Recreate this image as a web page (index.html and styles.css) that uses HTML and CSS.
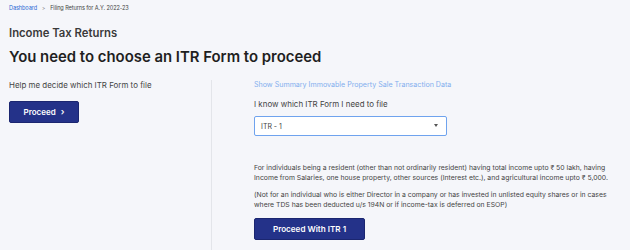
FILE: index.html
```html
<!DOCTYPE html>
<html>
<head>
<meta charset="utf-8">
<link rel="stylesheet" href="styles.css">
</head>
<body>
<div class="page">
  <nav class="crumbs">
    <a class="crumb-link">Dashboard</a>
    <span class="crumb-sep">&gt;</span>
    <span class="crumb-cur">Filing Returns for A.Y. 2022-23</span>
  </nav>
  <div class="subtitle">Income Tax Returns</div>
  <h1 class="title">You need to choose an ITR Form to proceed</h1>
  <div class="cols">
    <div class="left">
      <p class="label">Help me decide which ITR Form to file</p>
      <button class="btn btn-left">Proceed <span class="chev">&#8250;</span></button>
    </div>
    <div class="right">
      <a class="link">Show Summary Immovable Property Sale Transaction Data</a>
      <p class="label label-right">I know which ITR Form I need to file</p>
      <div class="select">
        <span>ITR - 1</span>
        <svg class="caret" width="4" height="3" viewBox="0 0 4 3"><path d="M0 0H4L2 3Z" fill="#555"/></svg>
      </div>
      <p class="desc">For individuals being a resident (other than not ordinarily resident) having total income upto &#8377; 50 lakh, having Income from Salaries, one house property, other sources (Interest etc.), and agricultural income upto &#8377; 5,000.</p>
      <p class="desc">(Not for an individual who is either Director in a company or has invested in unlisted equity shares or in cases where TDS has been deducted u/s 194N or if income-tax is deferred on ESOP)</p>
      <button class="btn btn-right">Proceed With ITR 1</button>
    </div>
  </div>
</div>
</body>
</html>
```
FILE: styles.css
```css
html, body {
  margin: 0;
  padding: 0;
  background: #f5f6fa;
  font-family: Inter, "Noto Sans", sans-serif;
  color: #2b2b2b;
}
.page {
  width: 630px;
  height: 250px;
  overflow: hidden;
  padding: 3px 9px 0 9px;
  box-sizing: border-box;
}
.crumbs {
  display: flex;
  align-items: center;
  gap: 5px;
  font-size: 5.6px;
  height: 9px;
  letter-spacing: -0.1px;
}
.crumb-link { color: #2e6dd6; }
.crumb-sep { color: #777; font-size: 5px; }
.crumb-cur { color: #444; }
.subtitle {
  margin-top: 15px;
  font-size: 11.3px;
  font-weight: 600;
  color: #3a3a3a;
  line-height: 12px;
}
.title {
  margin: 7px 0 0 0;
  font-size: 14.9px;
  font-weight: 600;
  line-height: 22px;
  color: #1f1f1f;
}
.cols {
  display: flex;
  margin-top: 12px;
}
.left {
  width: 202px;
  border-right: 1px solid #e3e5ea;
  height: 200px;
}
.right {
  padding-left: 42px;
  width: 366px;
}
.label {
  margin: 0;
  font-size: 7.95px;
  color: #444;
  line-height: 10px;
}
.btn {
  background: #243289;
  color: #fff;
  border: 1px solid #1b2670;
  border-radius: 2px;
  font-family: Inter, "Noto Sans", sans-serif;
  font-weight: 600;
  font-size: 8px;
  padding: 0;
  height: 22px;
  display: flex;
  align-items: center;
  justify-content: center;
}
.btn-left {
  width: 70px;
  margin-top: 11px;
  gap: 5px;
}
.chev { font-size: 9px; line-height: 9px; margin-top: -1px; }
.link {
  display: block;
  color: #82aeee;
  font-size: 7.1px;
  line-height: 10px;
}
.label-right { margin-top: 9px; }
.select {
  margin-top: 7px;
  width: 193px;
  height: 20px;
  box-sizing: border-box;
  border: 1px solid #6fa3ee;
  border-radius: 2px;
  background: #fff;
  display: flex;
  align-items: center;
  justify-content: space-between;
  padding: 0 8px 0 6px;
  font-size: 7px;
  color: #444;
}
.caret { margin-top: -1px; }
.desc {
  margin: 0;
  font-size: 6.85px;
  line-height: 10px;
  color: #444;
}
.select + .desc { margin-top: 27px; }
.desc + .desc { margin-top: 7px; }
.btn-right {
  width: 111px;
  margin-top: 8px;
  font-size: 8.1px;
}
```
